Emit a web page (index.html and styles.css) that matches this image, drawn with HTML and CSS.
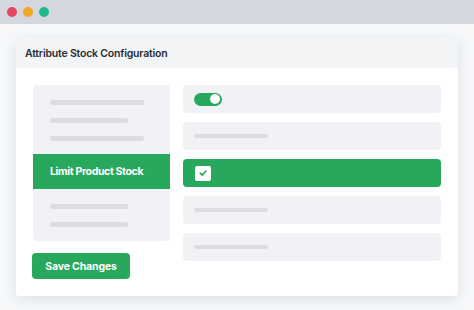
FILE: index.html
```html
<!DOCTYPE html>
<html>
<head>
<meta charset="utf-8">
<link rel="stylesheet" href="styles.css">
</head>
<body>
<div class="topbar">
  <span class="dot red"></span><span class="dot orange"></span><span class="dot teal"></span>
</div>
<div class="card">
  <div class="card-header">Attribute Stock Configuration</div>
  <div class="card-body">
    <div class="left">
      <div class="panel">
        <div class="panel-top">
          <div class="line long"></div>
          <div class="line short"></div>
          <div class="line long"></div>
        </div>
        <div class="panel-active">Limit Product Stock</div>
        <div class="panel-bottom">
          <div class="line short"></div>
          <div class="line short"></div>
        </div>
      </div>
      <button class="save">Save Changes</button>
    </div>
    <div class="right">
      <div class="row"><span class="toggle"><span class="knob"></span></span></div>
      <div class="row"><div class="line rline"></div></div>
      <div class="row active">
        <span class="check"><svg width="10" height="10" viewBox="0 0 10 10"><path d="M2.2 5.2 L4.2 7.1 L7.8 3.2" fill="none" stroke="#27a85d" stroke-width="1.6" stroke-linecap="round" stroke-linejoin="round"/></svg></span>
      </div>
      <div class="row"><div class="line rline"></div></div>
      <div class="row"><div class="line rline"></div></div>
    </div>
  </div>
</div>
</body>
</html>
```
FILE: styles.css
```css
* { box-sizing: border-box; }
html, body { margin: 0; padding: 0; }
body {
  width: 474px;
  height: 310px;
  background: #f6f8fa;
  font-family: "Inter", "Open Sans", sans-serif;
  overflow: hidden;
}
.topbar {
  height: 24px;
  background: #d4d7dd;
  display: flex;
  align-items: center;
  gap: 6px;
  padding-left: 7px;
}
.dot { width: 10px; height: 10px; border-radius: 50%; display: block; }
.red { background: #e9455e; }
.orange { background: #f5a623; }
.teal { background: #1fba8c; }
.card {
  margin: 14px 0 0 16px;
  width: 442px;
  height: 258px;
  background: #ffffff;
  border-radius: 3px;
  box-shadow: 0 3px 14px rgba(120, 130, 150, 0.2);
  overflow: hidden;
}
.card-header {
  height: 30px;
  background: #f3f4f6;
  display: flex;
  align-items: center;
  padding-left: 9px;
  font-size: 10.5px;
  font-weight: 600;
  color: #2a2d33;
  letter-spacing: -0.2px;
}
.card-body {
  display: flex;
  gap: 13px;
  padding: 17px 17px 0 17px;
}
.left { width: 137px; display: flex; flex-direction: column; }
.panel {
  background: #f1f2f5;
  border-radius: 4px;
  overflow: hidden;
  height: 156px;
  display: flex;
  flex-direction: column;
}
.panel-top {
  height: 69px;
  display: flex;
  flex-direction: column;
  padding: 15px 0 0 17px;
  gap: 13px;
}
.panel-bottom {
  flex: 1;
  display: flex;
  flex-direction: column;
  padding: 15px 0 0 17px;
  gap: 13px;
}
.line { height: 5px; border-radius: 3px; background: #dcdde1; }
.line.long { width: 94px; }
.line.short { width: 78px; }
.panel-active {
  height: 35px;
  background: #27a85d;
  color: #fff;
  font-size: 10.5px;
  font-weight: 700;
  letter-spacing: -0.35px;
  display: flex;
  align-items: center;
  padding-left: 17px;
}
.save {
  margin-top: 12px;
  width: 98px;
  height: 26px;
  margin-left: -1px;
  border: none;
  border-radius: 4px;
  background: #27a85d;
  color: #fff;
  font-family: inherit;
  font-size: 10.5px;
  font-weight: 700;
  letter-spacing: -0.15px;
  padding: 0;
}
.right { width: 258px; display: flex; flex-direction: column; gap: 9px; }
.row {
  height: 28px;
  background: #f1f2f5;
  border-radius: 4px;
  display: flex;
  align-items: center;
  padding-left: 11px;
}
.row.active { background: #27a85d; }
.rline { width: 74px; height: 4px; }
.toggle {
  width: 28px;
  height: 13px;
  border-radius: 7px;
  background: #27a85d;
  display: flex;
  align-items: center;
  justify-content: flex-end;
  padding-right: 2px;
}
.knob { width: 10px; height: 10px; border-radius: 50%; background: #fff; display: block; }
.check {
  width: 16px;
  height: 15px;
  background: #fff;
  border-radius: 2px;
  display: flex;
  align-items: center;
  justify-content: center;
  margin-left: 1px;
}
.check svg { display: block; }
```
